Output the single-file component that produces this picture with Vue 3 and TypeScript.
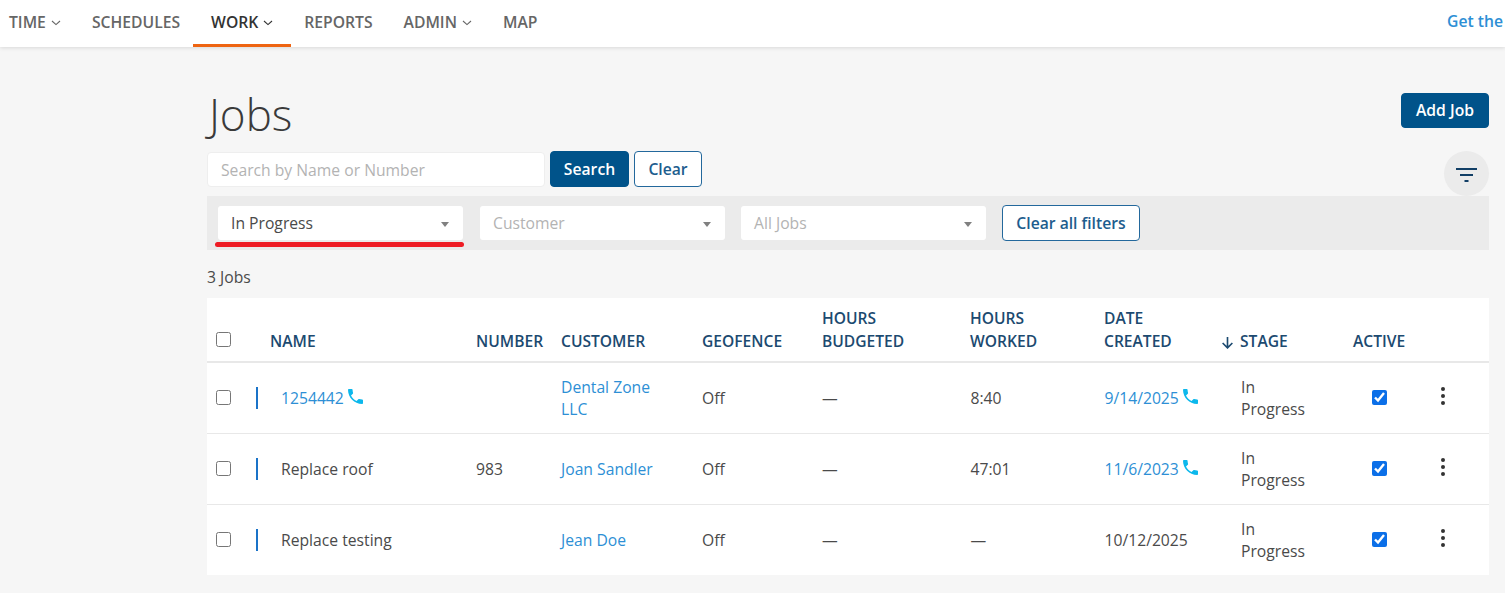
<script setup lang="ts">
interface Job {
  name: string
  nameLink: boolean
  namePhone: boolean
  number: string
  customer: string
  worked: string
  date: string
  dateLink: boolean
}

interface NavItem {
  label: string
  caret: boolean
  active?: boolean
}

const navItems: NavItem[] = [
  { label: 'TIME', caret: true },
  { label: 'SCHEDULES', caret: false },
  { label: 'WORK', caret: true, active: true },
  { label: 'REPORTS', caret: false },
  { label: 'ADMIN', caret: true },
  { label: 'MAP', caret: false }
]

const filters = [
  { label: 'In Progress', placeholder: false, marked: true },
  { label: 'Customer', placeholder: true, marked: false },
  { label: 'All Jobs', placeholder: true, marked: false }
]

const jobs: Job[] = [
  { name: '1254442', nameLink: true, namePhone: true, number: '', customer: 'Dental Zone LLC', worked: '8:40', date: '9/14/2025', dateLink: true },
  { name: 'Replace roof', nameLink: false, namePhone: false, number: '983', customer: 'Joan Sandler', worked: '47:01', date: '11/6/2023', dateLink: true },
  { name: 'Replace testing', nameLink: false, namePhone: false, number: '', customer: 'Jean Doe', worked: '—', date: '10/12/2025', dateLink: false }
]

const phonePath =
  'M6.62 10.79c1.44 2.83 3.76 5.14 6.59 6.59l2.2-2.2c.27-.27.67-.36 1.02-.24 1.12.37 2.33.57 3.57.57.55 0 1 .45 1 1V20c0 .55-.45 1-1 1-9.39 0-17-7.61-17-17 0-.55.45-1 1-1h3.5c.55 0 1 .45 1 1 0 1.25.2 2.45.57 3.57.11.35.03.74-.25 1.02l-2.2 2.2z'
</script>

<template>
  <div class="page">
    <nav class="nav">
      <a
        v-for="item in navItems"
        :key="item.label"
        class="nav__item"
        :class="{ 'nav__item--active': item.active }"
      >
        {{ item.label }}
        <svg v-if="item.caret" class="nav__caret" viewBox="0 0 10 6" width="10" height="6">
          <path d="M1 1l4 3.6L9 1" fill="none" stroke="currentColor" stroke-width="1.1" />
        </svg>
      </a>
      <a class="nav__app">Get the</a>
    </nav>

    <main class="main">
      <div class="title-row">
        <h1 class="title">Jobs</h1>
        <button class="btn btn--solid btn--add">Add Job</button>
      </div>

      <div class="search-row">
        <div class="search-input">Search by Name or Number</div>
        <button class="btn btn--solid btn--search">Search</button>
        <button class="btn btn--outline btn--clear">Clear</button>
        <button class="filter-toggle" aria-label="Filters">
          <svg viewBox="0 0 21 14" width="21" height="14">
            <path d="M0 1h21M4 7h13M8.500 13h4" stroke="#123f66" stroke-width="2" fill="none" />
          </svg>
        </button>
      </div>

      <div class="filters">
        <div
          v-for="filter in filters"
          :key="filter.label"
          class="select"
          :class="{ 'select--placeholder': filter.placeholder, 'select--marked': filter.marked }"
        >
          {{ filter.label }}
          <span class="select__arrow"></span>
        </div>
        <button class="btn btn--outline btn--clear-all">Clear all filters</button>
      </div>

      <div class="count">3 Jobs</div>

      <table class="table">
        <colgroup>
          <col style="width: 63px" />
          <col style="width: 206px" />
          <col style="width: 85px" />
          <col style="width: 141px" />
          <col style="width: 120px" />
          <col style="width: 148px" />
          <col style="width: 134px" />
          <col style="width: 136px" />
          <col style="width: 113px" />
          <col style="width: 66px" />
          <col style="width: 70px" />
        </colgroup>
        <thead>
          <tr>
            <th class="cell-check"><input type="checkbox" class="check check--head" /></th>
            <th>NAME</th>
            <th>NUMBER</th>
            <th>CUSTOMER</th>
            <th>GEOFENCE</th>
            <th>HOURS<br />BUDGETED</th>
            <th>HOURS<br />WORKED</th>
            <th class="th-date">DATE<br />CREATED</th>
            <th class="th-stage">
              <svg class="sort-arrow" viewBox="0 0 12 12" width="13" height="13">
                <path d="M6 1v9.500M1.500 6.500L6 11l4.500-4.500" fill="none" stroke="#1c4a70" stroke-width="1.500" />
              </svg>
              STAGE
            </th>
            <th>ACTIVE</th>
            <th></th>
          </tr>
        </thead>
        <tbody>
          <tr v-for="job in jobs" :key="job.name">
            <td class="cell-check">
              <div class="check-wrap">
                <input type="checkbox" class="check" />
                <span class="marker"></span>
              </div>
            </td>
            <td class="cell-name">
              <a v-if="job.nameLink" class="link">{{ job.name }}</a>
              <template v-else>{{ job.name }}</template>
              <svg v-if="job.namePhone" class="phone" viewBox="3 3 18 18" width="15" height="15">
                <path :d="phonePath" />
              </svg>
            </td>
            <td>{{ job.number }}</td>
            <td class="cell-customer"><a class="link">{{ job.customer }}</a></td>
            <td>Off</td>
            <td>—</td>
            <td class="cell-worked">{{ job.worked }}</td>
            <td class="cell-date">
              <a v-if="job.dateLink" class="link">{{ job.date }}</a>
              <template v-else>{{ job.date }}</template>
              <svg v-if="job.dateLink" class="phone" viewBox="3 3 18 18" width="15" height="15">
                <path :d="phonePath" />
              </svg>
            </td>
            <td class="cell-stage">In<br />Progress</td>
            <td class="cell-active"><input type="checkbox" class="check" checked /></td>
            <td class="cell-menu">
              <span class="dots"><i></i><i></i><i></i></span>
            </td>
          </tr>
        </tbody>
      </table>
    </main>
  </div>
</template>

<style>
html,
body {
  margin: 0;
  background: #f6f6f6;
}
</style>

<style scoped>
.page {
  height: 593px;
  overflow: hidden;
  font-family: 'Open Sans', 'Liberation Sans', sans-serif;
  font-size: 15.7px;
  color: #4a4a4a;
  background: #f6f6f6;
}

.nav {
  display: flex;
  align-items: stretch;
  height: 47px;
  padding-left: 9px;
  background: #fff;
  box-shadow: 0 1px 4px rgba(0, 0, 0, 0.12);
  position: relative;
}

.nav__item {
  display: flex;
  align-items: center;
  gap: 5px;
  margin-right: 31px;
  padding-bottom: 4px;
  font-size: 15.7px;
  font-weight: 600;
  color: #666;
  position: relative;
}

.nav__item--active {
  color: #333;
}

.nav__item--active::after {
  content: '';
  position: absolute;
  left: -18px;
  right: -18px;
  bottom: 0;
  height: 3px;
  background: #ee6411;
}

.nav__caret {
  margin-top: 3px;
}

.nav__app {
  margin-left: auto;
  padding: 0 2px 6px 0;
  align-self: center;
  font-size: 15.7px;
  font-weight: 600;
  color: #2d8fd5;
}

.main {
  padding: 0 16px 0 207px;
}

.title-row {
  display: flex;
  justify-content: space-between;
  align-items: flex-start;
  height: 104px;
}

.title {
  margin: 39px 0 0 2px;
  font-size: 44px;
  line-height: 57px;
  font-weight: 300;
  color: #3a3a3a;
}

.btn {
  box-sizing: border-box;
  font-family: inherit;
  font-size: 15.7px;
  font-weight: 600;
  border-radius: 4px;
  padding: 0;
}

.btn--solid {
  background: #00538a;
  border: 1px solid #00538a;
  color: #fff;
}

.btn--outline {
  background: #fff;
  border: 1px solid #23689c;
  color: #1d5d8e;
}

.btn--add {
  width: 88px;
  height: 35px;
  margin-top: 46px;
  padding-bottom: 2px;
}

.search-row {
  display: flex;
  align-items: flex-start;
  height: 45px;
}

.search-input {
  box-sizing: border-box;
  width: 338px;
  height: 35px;
  margin-top: 1px;
  padding-left: 13px;
  line-height: 34px;
  background: #fff;
  border: 1px solid #eee;
  border-radius: 4px;
  color: #b3b3b3;
}

.btn--search {
  width: 79px;
  height: 36px;
  margin-left: 5px;
}

.btn--clear {
  width: 68px;
  height: 36px;
  margin-left: 5px;
}

.filter-toggle {
  display: flex;
  align-items: center;
  justify-content: center;
  width: 45px;
  height: 45px;
  margin-left: auto;
  padding: 2px 0 0;
  border: 0;
  border-radius: 50%;
  background: #ebebeb;
}

.filters {
  display: flex;
  align-items: center;
  height: 54px;
  padding-left: 11px;
  background: #ebebeb;
}

.select {
  box-sizing: border-box;
  display: flex;
  align-items: center;
  justify-content: space-between;
  width: 245px;
  height: 34px;
  margin-right: 16px;
  padding: 0 14px 1px 13px;
  background: #fff;
  border-radius: 3px;
  position: relative;
}

.select:first-child {
  margin-right: 17px;
}

.select--placeholder {
  color: #b3b3b3;
}

.select--marked::after {
  content: '';
  position: absolute;
  left: -3px;
  right: -1px;
  bottom: -7px;
  height: 5px;
  border-radius: 3px;
  background: #ee1c25;
}

.select__arrow {
  width: 0;
  height: 0;
  margin-top: 4px;
  border-left: 4.5px solid transparent;
  border-right: 4.5px solid transparent;
  border-top: 5px solid #808080;
}

.btn--clear-all {
  width: 138px;
  height: 36px;
  margin-top: -1px;
}

.count {
  height: 48px;
  line-height: 54px;
}

.table {
  width: 1282px;
  table-layout: fixed;
  border-collapse: collapse;
  background: #fff;
}

th {
  height: 64px;
  padding: 0 0 8px;
  box-sizing: border-box;
  border-bottom: 2px solid #e8e8e8;
  text-align: left;
  vertical-align: bottom;
  font-size: 15.6px;
  line-height: 23px;
  font-weight: 600;
  color: #1c4a70;
}

td {
  height: 71px;
  padding: 0;
  box-sizing: border-box;
  border-bottom: 1px solid #e8e8e8;
  line-height: 22px;
  vertical-align: middle;
}

tbody tr:last-child td {
  border-bottom: 0;
}

th.cell-check,
td.cell-check {
  padding-left: 9px;
}

th.cell-check {
  padding-bottom: 14px;
}

.check-wrap {
  display: flex;
  align-items: center;
  justify-content: space-between;
  padding-right: 12px;
}

.check {
  display: block;
  width: 15px;
  height: 15px;
  margin: 0;
  accent-color: #0b6fe8;
}

.marker {
  width: 2px;
  height: 22px;
  background: #1a73c8;
}

.cell-name {
  padding-left: 11px;
}

.link {
  color: #2d8fd5;
}

.phone {
  margin-left: 4px;
  fill: #0cb8ec;
  vertical-align: 0;
}

.cell-customer {
  padding-right: 40px;
}

.cell-worked,
.cell-date {
  padding-left: 0.500px;
}

.th-stage {
  position: relative;
}

.sort-arrow {
  position: absolute;
  left: -19px;
  bottom: 12px;
}

.cell-stage {
  padding-left: 1px;
}

.cell-active .check {
  margin-left: 18.500px;
}

.cell-menu {
  padding-left: 22px;
}

.dots {
  display: flex;
  flex-direction: column;
  gap: 3px;
  margin-top: -3px;
}

.dots i {
  display: block;
  width: 4px;
  height: 4px;
  border-radius: 50%;
  background: #333;
}
</style>
